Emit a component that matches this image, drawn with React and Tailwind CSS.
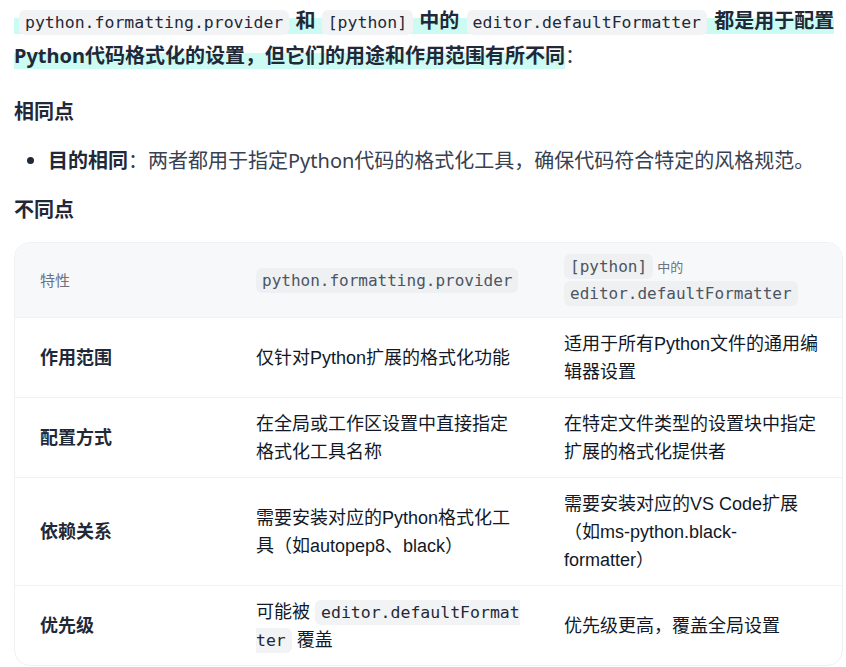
const code = 'font-["DejaVu_Sans_Mono",monospace] text-[16.5px] leading-[20px] bg-[#f2f3f5] rounded-[6px] px-[6px] py-[3px] font-normal';
const thCode = 'font-["DejaVu_Sans_Mono",monospace] text-[16px] leading-[20px] bg-[#eff0f2] text-[#4b5563] rounded-[6px] px-[6px] py-[3px]';

const rows = [
  {
    label: '作用范围',
    a: '仅针对Python扩展的格式化功能',
    b: '适用于所有Python文件的通用编辑器设置',
  },
  {
    label: '配置方式',
    a: '在全局或工作区设置中直接指定格式化工具名称',
    b: '在特定文件类型的设置块中指定扩展的格式化提供者',
  },
  {
    label: '依赖关系',
    a: '需要安装对应的Python格式化工具（如autopep8、black）',
    b: (
      <>
        需要安装对应的VS Code扩展（如ms-python.black-
        <br />
        formatter）
      </>
    ),
  },
  {
    label: '优先级',
    a: (
      <>
        可能被 <code className={code + ' break-all text-[#1f2937]'}>editor.defaultFormatter</code> 覆盖
      </>
    ),
    b: '优先级更高，覆盖全局设置',
  },
];

export default function App() {
  return (
    <div className="bg-white min-h-[667px] pl-[14px] pr-[6px] pt-[3px] text-[#1f2937] font-['Noto_Sans','Noto_Sans_CJK_SC',sans-serif]">
      <p className="text-[20px] leading-[35px]">
        <span className="font-bold bg-[linear-gradient(transparent_42%,#ccfbf4_42%)]">
          <code className={code + ' ml-[5px] mr-[1px] text-[#1f2937]'}>python.formatting.provider</code> 和{' '}
          <code className={code + ' mx-[1px] text-[#1f2937]'}>[python]</code> 中的{' '}
          <code className={code + ' mx-[2px] text-[#1f2937]'}>editor.defaultFormatter</code> 都是用于配置Python代码格式化的设置，但它们的用途和作用范围有所不同
        </span>
        <span className="text-[#374151]">：</span>
      </p>

      <h3 className="mt-[24px] text-[20px] leading-[30px] font-bold">相同点</h3>

      <ul className="mt-[16px]">
        <li className="flex items-center text-[20px] leading-[35px]">
          <span className="w-[7px] h-[7px] rounded-full bg-[#1f2937] ml-[13px] mr-[14px]"></span>
          <span>
            <span className="font-bold">目的相同</span>
            <span className="text-[#374151]">：两者都用于指定Python代码的格式化工具，确保代码符合特定的风格规范。</span>
          </span>
        </li>
      </ul>

      <h3 className="mt-[17px] text-[20px] leading-[30px] font-bold">不同点</h3>

      <div className="mt-[17px] w-[829px] border border-[#eef0f2] rounded-[16px] overflow-hidden">
        <table className="w-full table-fixed border-collapse font-['Liberation_Sans','Noto_Sans_CJK_SC',sans-serif]">
          <colgroup>
            <col className="w-[215px]" />
            <col className="w-[308px]" />
            <col />
          </colgroup>
          <thead className="bg-[#f7f8fa]">
            <tr>
              <th className="pl-[25px] pr-[16px] pt-[11px] pb-[10px] text-left align-middle text-[15px] leading-[26px] font-normal text-[#6b7280]">特性</th>
              <th className="pl-[26px] pr-[16px] pt-[11px] pb-[10px] text-left align-middle text-[15px] leading-[26px] font-normal text-[#6b7280]">
                {' '}<code className={thCode}>python.formatting.provider</code>
              </th>
              <th className="pl-[26px] pr-[20px] pt-[11px] pb-[10px] text-left align-middle text-[15px] leading-[26px] font-normal text-[#6b7280]">
                {' '}<code className={thCode}>[python]</code> <span className="text-[13px]">中的</span>{' '}
                <code className={thCode}>editor.defaultFormatter</code>
              </th>
            </tr>
          </thead>
          <tbody>
            {rows.map((r) => (
              <tr key={r.label} className="border-t border-[#f0f1f3]">
                <td className="pl-[25px] pr-[16px] pt-[12px] pb-[11px] align-middle text-[18px] leading-[28px] font-bold text-[#1f2937]">{r.label}</td>
                <td className="pl-[26px] pr-[15px] pt-[12px] pb-[11px] align-middle text-[18px] leading-[28px] text-[#111827]">{r.a}</td>
                <td className="pl-[26px] pr-[20px] pt-[12px] pb-[11px] align-middle text-[18px] leading-[28px] text-[#111827]">{r.b}</td>
              </tr>
            ))}
          </tbody>
        </table>
      </div>
    </div>
  );
}
